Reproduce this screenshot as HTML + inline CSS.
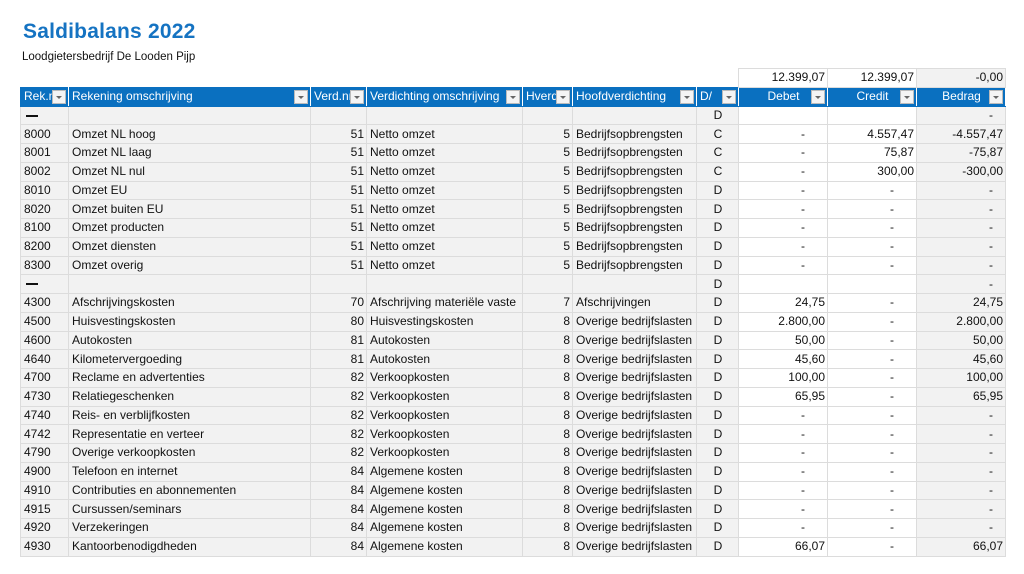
<!DOCTYPE html>
<html><head><meta charset="utf-8"><style>
body{margin:0;background:#fff;width:1024px;height:574px;overflow:hidden;font-family:"Liberation Sans","DejaVu Sans",sans-serif;}
h1{position:absolute;left:23px;top:20px;margin:0;font-size:21px;font-weight:bold;color:#1573c2;letter-spacing:0.2px}
.sub{position:absolute;left:22px;top:51px;font-size:11.5px;color:#111}
table{position:absolute;left:20px;top:68px;width:985px;border-collapse:collapse;table-layout:fixed;font-size:12px;color:#111}
td{height:17.75px;padding:0 2px 0 3px;border:1px solid #dcdcdc;white-space:nowrap;overflow:hidden;background:#f2f2f2;line-height:17px}
td.w{background:#fff}
td.r{text-align:right}
td.c{text-align:center}
tr.top td{border:none;background:transparent}
tr.top td.t{border:1px solid #dcdcdc;background:#fff;text-align:right}
tr.top td.t.g{background:#f2f2f2}
tr.h td{background:#0a70c0;color:#fff;border:1px solid #0a70c0;border-right:1px solid #fff;position:relative}
.dd{position:absolute;right:2px;top:2px;width:14px;height:14px;background:#f4f4f4;border:1px solid #bbb;box-sizing:border-box}
.dd:after{content:"";position:absolute;left:3px;top:5px;border-left:3px solid transparent;border-right:3px solid transparent;border-top:3px solid #666}
.dash{display:inline-block;width:12px;height:2px;background:#111;vertical-align:middle;margin-left:2px}
</style></head><body>
<h1>Saldibalans 2022</h1>
<div class="sub">Loodgietersbedrijf De Looden Pijp</div>
<table>
<colgroup><col style="width:48px"><col style="width:242px"><col style="width:56px"><col style="width:156px"><col style="width:50px"><col style="width:124px"><col style="width:42px"><col style="width:89px"><col style="width:89px"><col style="width:89px"></colgroup>
<tr class="top"><td></td><td></td><td></td><td></td><td></td><td></td><td></td><td class="t">12.399,07</td><td class="t">12.399,07</td><td class="t g">-0,00</td></tr>
<tr class="h"><td>Rek.n<span class="dd"></span></td><td>Rekening omschrijving<span class="dd"></span></td><td>Verd.nr<span class="dd"></span></td><td>Verdichting omschrijving<span class="dd"></span></td><td>Hverd<span class="dd"></span></td><td>Hoofdverdichting<span class="dd"></span></td><td>D/<span class="dd"></span></td><td class="c">Debet<span class="dd"></span></td><td class="c">Credit<span class="dd"></span></td><td class="c">Bedrag<span class="dd"></span></td></tr>
<tr><td><span class="dash"></span></td><td></td><td></td><td></td><td></td><td></td><td class="c">D</td><td class="w"></td><td class="w"></td><td class="r">-&nbsp;&nbsp;&nbsp;</td></tr>
<tr><td>8000</td><td>Omzet NL hoog</td><td class="r">51</td><td>Netto omzet</td><td class="r">5</td><td>Bedrijfsopbrengsten</td><td class="c">C</td><td class="w r">-&nbsp;&nbsp;&nbsp;&nbsp;&nbsp;&nbsp;</td><td class="w r">4.557,47</td><td class="r">-4.557,47</td></tr>
<tr><td>8001</td><td>Omzet NL laag</td><td class="r">51</td><td>Netto omzet</td><td class="r">5</td><td>Bedrijfsopbrengsten</td><td class="c">C</td><td class="w r">-&nbsp;&nbsp;&nbsp;&nbsp;&nbsp;&nbsp;</td><td class="w r">75,87</td><td class="r">-75,87</td></tr>
<tr><td>8002</td><td>Omzet NL nul</td><td class="r">51</td><td>Netto omzet</td><td class="r">5</td><td>Bedrijfsopbrengsten</td><td class="c">C</td><td class="w r">-&nbsp;&nbsp;&nbsp;&nbsp;&nbsp;&nbsp;</td><td class="w r">300,00</td><td class="r">-300,00</td></tr>
<tr><td>8010</td><td>Omzet EU</td><td class="r">51</td><td>Netto omzet</td><td class="r">5</td><td>Bedrijfsopbrengsten</td><td class="c">D</td><td class="w r">-&nbsp;&nbsp;&nbsp;&nbsp;&nbsp;&nbsp;</td><td class="w r">-&nbsp;&nbsp;&nbsp;&nbsp;&nbsp;&nbsp;</td><td class="r">-&nbsp;&nbsp;&nbsp;</td></tr>
<tr><td>8020</td><td>Omzet buiten EU</td><td class="r">51</td><td>Netto omzet</td><td class="r">5</td><td>Bedrijfsopbrengsten</td><td class="c">D</td><td class="w r">-&nbsp;&nbsp;&nbsp;&nbsp;&nbsp;&nbsp;</td><td class="w r">-&nbsp;&nbsp;&nbsp;&nbsp;&nbsp;&nbsp;</td><td class="r">-&nbsp;&nbsp;&nbsp;</td></tr>
<tr><td>8100</td><td>Omzet producten</td><td class="r">51</td><td>Netto omzet</td><td class="r">5</td><td>Bedrijfsopbrengsten</td><td class="c">D</td><td class="w r">-&nbsp;&nbsp;&nbsp;&nbsp;&nbsp;&nbsp;</td><td class="w r">-&nbsp;&nbsp;&nbsp;&nbsp;&nbsp;&nbsp;</td><td class="r">-&nbsp;&nbsp;&nbsp;</td></tr>
<tr><td>8200</td><td>Omzet diensten</td><td class="r">51</td><td>Netto omzet</td><td class="r">5</td><td>Bedrijfsopbrengsten</td><td class="c">D</td><td class="w r">-&nbsp;&nbsp;&nbsp;&nbsp;&nbsp;&nbsp;</td><td class="w r">-&nbsp;&nbsp;&nbsp;&nbsp;&nbsp;&nbsp;</td><td class="r">-&nbsp;&nbsp;&nbsp;</td></tr>
<tr><td>8300</td><td>Omzet overig</td><td class="r">51</td><td>Netto omzet</td><td class="r">5</td><td>Bedrijfsopbrengsten</td><td class="c">D</td><td class="w r">-&nbsp;&nbsp;&nbsp;&nbsp;&nbsp;&nbsp;</td><td class="w r">-&nbsp;&nbsp;&nbsp;&nbsp;&nbsp;&nbsp;</td><td class="r">-&nbsp;&nbsp;&nbsp;</td></tr>
<tr><td><span class="dash"></span></td><td></td><td></td><td></td><td></td><td></td><td class="c">D</td><td class="w"></td><td class="w"></td><td class="r">-&nbsp;&nbsp;&nbsp;</td></tr>
<tr><td>4300</td><td>Afschrijvingskosten</td><td class="r">70</td><td>Afschrijving materiële vaste</td><td class="r">7</td><td>Afschrijvingen</td><td class="c">D</td><td class="w r">24,75</td><td class="w r">-&nbsp;&nbsp;&nbsp;&nbsp;&nbsp;&nbsp;</td><td class="r">24,75</td></tr>
<tr><td>4500</td><td>Huisvestingskosten</td><td class="r">80</td><td>Huisvestingskosten</td><td class="r">8</td><td>Overige bedrijfslasten</td><td class="c">D</td><td class="w r">2.800,00</td><td class="w r">-&nbsp;&nbsp;&nbsp;&nbsp;&nbsp;&nbsp;</td><td class="r">2.800,00</td></tr>
<tr><td>4600</td><td>Autokosten</td><td class="r">81</td><td>Autokosten</td><td class="r">8</td><td>Overige bedrijfslasten</td><td class="c">D</td><td class="w r">50,00</td><td class="w r">-&nbsp;&nbsp;&nbsp;&nbsp;&nbsp;&nbsp;</td><td class="r">50,00</td></tr>
<tr><td>4640</td><td>Kilometervergoeding</td><td class="r">81</td><td>Autokosten</td><td class="r">8</td><td>Overige bedrijfslasten</td><td class="c">D</td><td class="w r">45,60</td><td class="w r">-&nbsp;&nbsp;&nbsp;&nbsp;&nbsp;&nbsp;</td><td class="r">45,60</td></tr>
<tr><td>4700</td><td>Reclame en advertenties</td><td class="r">82</td><td>Verkoopkosten</td><td class="r">8</td><td>Overige bedrijfslasten</td><td class="c">D</td><td class="w r">100,00</td><td class="w r">-&nbsp;&nbsp;&nbsp;&nbsp;&nbsp;&nbsp;</td><td class="r">100,00</td></tr>
<tr><td>4730</td><td>Relatiegeschenken</td><td class="r">82</td><td>Verkoopkosten</td><td class="r">8</td><td>Overige bedrijfslasten</td><td class="c">D</td><td class="w r">65,95</td><td class="w r">-&nbsp;&nbsp;&nbsp;&nbsp;&nbsp;&nbsp;</td><td class="r">65,95</td></tr>
<tr><td>4740</td><td>Reis- en verblijfkosten</td><td class="r">82</td><td>Verkoopkosten</td><td class="r">8</td><td>Overige bedrijfslasten</td><td class="c">D</td><td class="w r">-&nbsp;&nbsp;&nbsp;&nbsp;&nbsp;&nbsp;</td><td class="w r">-&nbsp;&nbsp;&nbsp;&nbsp;&nbsp;&nbsp;</td><td class="r">-&nbsp;&nbsp;&nbsp;</td></tr>
<tr><td>4742</td><td>Representatie en verteer</td><td class="r">82</td><td>Verkoopkosten</td><td class="r">8</td><td>Overige bedrijfslasten</td><td class="c">D</td><td class="w r">-&nbsp;&nbsp;&nbsp;&nbsp;&nbsp;&nbsp;</td><td class="w r">-&nbsp;&nbsp;&nbsp;&nbsp;&nbsp;&nbsp;</td><td class="r">-&nbsp;&nbsp;&nbsp;</td></tr>
<tr><td>4790</td><td>Overige verkoopkosten</td><td class="r">82</td><td>Verkoopkosten</td><td class="r">8</td><td>Overige bedrijfslasten</td><td class="c">D</td><td class="w r">-&nbsp;&nbsp;&nbsp;&nbsp;&nbsp;&nbsp;</td><td class="w r">-&nbsp;&nbsp;&nbsp;&nbsp;&nbsp;&nbsp;</td><td class="r">-&nbsp;&nbsp;&nbsp;</td></tr>
<tr><td>4900</td><td>Telefoon en internet</td><td class="r">84</td><td>Algemene kosten</td><td class="r">8</td><td>Overige bedrijfslasten</td><td class="c">D</td><td class="w r">-&nbsp;&nbsp;&nbsp;&nbsp;&nbsp;&nbsp;</td><td class="w r">-&nbsp;&nbsp;&nbsp;&nbsp;&nbsp;&nbsp;</td><td class="r">-&nbsp;&nbsp;&nbsp;</td></tr>
<tr><td>4910</td><td>Contributies en abonnementen</td><td class="r">84</td><td>Algemene kosten</td><td class="r">8</td><td>Overige bedrijfslasten</td><td class="c">D</td><td class="w r">-&nbsp;&nbsp;&nbsp;&nbsp;&nbsp;&nbsp;</td><td class="w r">-&nbsp;&nbsp;&nbsp;&nbsp;&nbsp;&nbsp;</td><td class="r">-&nbsp;&nbsp;&nbsp;</td></tr>
<tr><td>4915</td><td>Cursussen/seminars</td><td class="r">84</td><td>Algemene kosten</td><td class="r">8</td><td>Overige bedrijfslasten</td><td class="c">D</td><td class="w r">-&nbsp;&nbsp;&nbsp;&nbsp;&nbsp;&nbsp;</td><td class="w r">-&nbsp;&nbsp;&nbsp;&nbsp;&nbsp;&nbsp;</td><td class="r">-&nbsp;&nbsp;&nbsp;</td></tr>
<tr><td>4920</td><td>Verzekeringen</td><td class="r">84</td><td>Algemene kosten</td><td class="r">8</td><td>Overige bedrijfslasten</td><td class="c">D</td><td class="w r">-&nbsp;&nbsp;&nbsp;&nbsp;&nbsp;&nbsp;</td><td class="w r">-&nbsp;&nbsp;&nbsp;&nbsp;&nbsp;&nbsp;</td><td class="r">-&nbsp;&nbsp;&nbsp;</td></tr>
<tr><td>4930</td><td>Kantoorbenodigdheden</td><td class="r">84</td><td>Algemene kosten</td><td class="r">8</td><td>Overige bedrijfslasten</td><td class="c">D</td><td class="w r">66,07</td><td class="w r">-&nbsp;&nbsp;&nbsp;&nbsp;&nbsp;&nbsp;</td><td class="r">66,07</td></tr>
</table>
</body></html>
